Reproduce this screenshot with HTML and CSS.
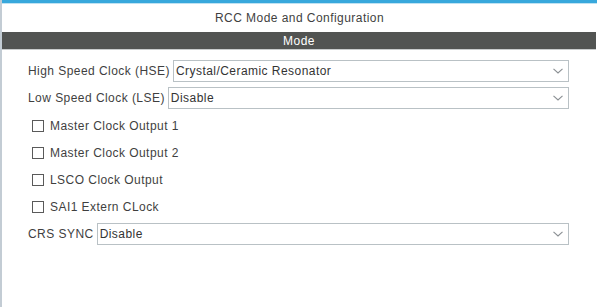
FILE: index.html
```html
<!DOCTYPE html>
<html>
<head>
<meta charset="utf-8">
<link rel="stylesheet" href="styles.css">
</head>
<body>
<div class="page">
  <div class="topbar"></div>
  <div class="title">RCC Mode and Configuration</div>
  <div class="section-bar">Mode</div>
  <div class="content">
    <div class="field">
      <span class="label">High Speed Clock (HSE)</span>
      <div class="select"><span class="value">Crystal/Ceramic Resonator</span><svg class="chev" width="10" height="6" viewBox="0 0 10 6"><path d="M0.5 0.8 L5 5 L9.5 0.8" fill="none" stroke="#8a8f93" stroke-width="1.1"/></svg></div>
    </div>
    <div class="field lse">
      <span class="label">Low Speed Clock (LSE)</span>
      <div class="select"><span class="value">Disable</span><svg class="chev" width="10" height="6" viewBox="0 0 10 6"><path d="M0.5 0.8 L5 5 L9.5 0.8" fill="none" stroke="#8a8f93" stroke-width="1.1"/></svg></div>
    </div>
    <div class="check"><span class="box"></span><span class="ctext">Master Clock Output 1</span></div>
    <div class="check"><span class="box"></span><span class="ctext">Master Clock Output 2</span></div>
    <div class="check"><span class="box"></span><span class="ctext">LSCO Clock Output</span></div>
    <div class="check"><span class="box"></span><span class="ctext">SAI1 Extern CLock</span></div>
    <div class="field crs">
      <span class="label">CRS SYNC</span>
      <div class="select"><span class="value">Disable</span><svg class="chev" width="10" height="6" viewBox="0 0 10 6"><path d="M0.5 0.8 L5 5 L9.5 0.8" fill="none" stroke="#8a8f93" stroke-width="1.1"/></svg></div>
    </div>
  </div>
</div>
</body>
</html>
```
FILE: styles.css
```css
html, body {
  margin: 0;
  padding: 0;
  background: #ffffff;
}
.page {
  width: 595px;
  height: 307px;
  border-left: 2px solid #c3ccd4;
  font-family: "Liberation Sans", Arial, sans-serif;
  font-size: 12px;
  color: #3f3f3f;
  letter-spacing: 0.45px;
  overflow: hidden;
}
.topbar {
  height: 3px;
  background: #38a8dc;
  border-bottom: 1px solid #bfe2f2;
  margin-left: -2px;
}
.title {
  height: 28px;
  line-height: 29px;
  text-align: center;
  color: #3f3f3f;
}
.section-bar {
  height: 17px;
  line-height: 18px;
  background: #525452;
  color: #ffffff;
  text-align: center;
  border-bottom: 1px solid #c9cccc;
  margin-right: 1px;
}
.content {
  padding: 10px 28px 0 26px;
  display: flex;
  flex-direction: column;
}
.field {
  display: flex;
  align-items: center;
  height: 22px;
  margin-bottom: 5px;
}
.field.lse {
  margin-bottom: 3px;
}
.field.crs {
  margin-top: 3px;
}
.label {
  white-space: nowrap;
  margin-right: 3px;
}
.select {
  flex: 1;
  height: 20px;
  border: 1px solid #b9c1c5;
  display: flex;
  align-items: center;
  justify-content: space-between;
  padding: 0 5px 0 2px;
}
.value {
  color: #333333;
}
.chev {
  display: block;
}
.check {
  height: 27px;
  display: flex;
  align-items: center;
  padding-left: 4px;
}
.box {
  width: 10px;
  height: 10px;
  border: 1px solid #5a5a5a;
  margin-right: 6px;
  background: #fff;
}
.ctext {
  color: #3f3f3f;
}
```
